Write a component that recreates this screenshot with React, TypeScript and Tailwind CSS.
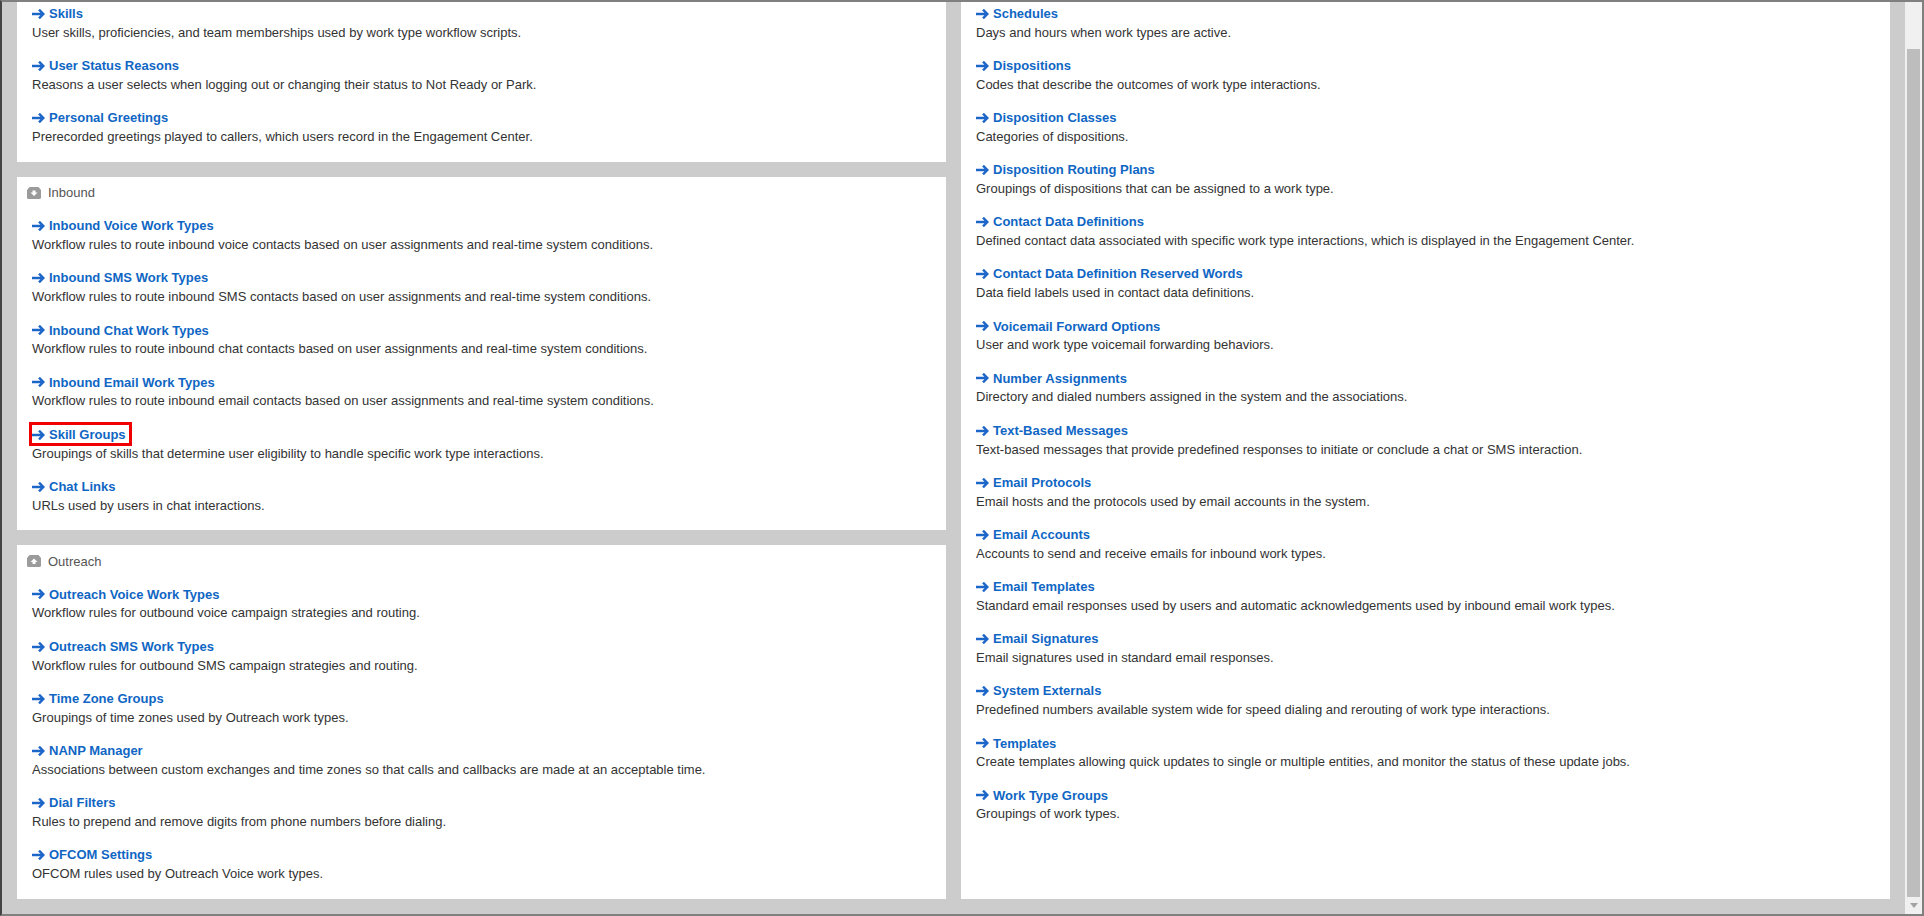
type Item = { title: string; desc: string; marked?: boolean };

const topLinks: Item[] = [
  { title: "Skills", desc: "User skills, proficiencies, and team memberships used by work type workflow scripts." },
  { title: "User Status Reasons", desc: "Reasons a user selects when logging out or changing their status to Not Ready or Park." },
  { title: "Personal Greetings", desc: "Prerecorded greetings played to callers, which users record in the Engagement Center." },
];

const inboundLinks: Item[] = [
  { title: "Inbound Voice Work Types", desc: "Workflow rules to route inbound voice contacts based on user assignments and real-time system conditions." },
  { title: "Inbound SMS Work Types", desc: "Workflow rules to route inbound SMS contacts based on user assignments and real-time system conditions." },
  { title: "Inbound Chat Work Types", desc: "Workflow rules to route inbound chat contacts based on user assignments and real-time system conditions." },
  { title: "Inbound Email Work Types", desc: "Workflow rules to route inbound email contacts based on user assignments and real-time system conditions." },
  { title: "Skill Groups", desc: "Groupings of skills that determine user eligibility to handle specific work type interactions.", marked: true },
  { title: "Chat Links", desc: "URLs used by users in chat interactions." },
];

const outreachLinks: Item[] = [
  { title: "Outreach Voice Work Types", desc: "Workflow rules for outbound voice campaign strategies and routing." },
  { title: "Outreach SMS Work Types", desc: "Workflow rules for outbound SMS campaign strategies and routing." },
  { title: "Time Zone Groups", desc: "Groupings of time zones used by Outreach work types." },
  { title: "NANP Manager", desc: "Associations between custom exchanges and time zones so that calls and callbacks are made at an acceptable time." },
  { title: "Dial Filters", desc: "Rules to prepend and remove digits from phone numbers before dialing." },
  { title: "OFCOM Settings", desc: "OFCOM rules used by Outreach Voice work types." },
];

const rightLinks: Item[] = [
  { title: "Schedules", desc: "Days and hours when work types are active." },
  { title: "Dispositions", desc: "Codes that describe the outcomes of work type interactions." },
  { title: "Disposition Classes", desc: "Categories of dispositions." },
  { title: "Disposition Routing Plans", desc: "Groupings of dispositions that can be assigned to a work type." },
  { title: "Contact Data Definitions", desc: "Defined contact data associated with specific work type interactions, which is displayed in the Engagement Center." },
  { title: "Contact Data Definition Reserved Words", desc: "Data field labels used in contact data definitions." },
  { title: "Voicemail Forward Options", desc: "User and work type voicemail forwarding behaviors." },
  { title: "Number Assignments", desc: "Directory and dialed numbers assigned in the system and the associations." },
  { title: "Text-Based Messages", desc: "Text-based messages that provide predefined responses to initiate or conclude a chat or SMS interaction." },
  { title: "Email Protocols", desc: "Email hosts and the protocols used by email accounts in the system." },
  { title: "Email Accounts", desc: "Accounts to send and receive emails for inbound work types." },
  { title: "Email Templates", desc: "Standard email responses used by users and automatic acknowledgements used by inbound email work types." },
  { title: "Email Signatures", desc: "Email signatures used in standard email responses." },
  { title: "System Externals", desc: "Predefined numbers available system wide for speed dialing and rerouting of work type interactions." },
  { title: "Templates", desc: "Create templates allowing quick updates to single or multiple entities, and monitor the status of these update jobs." },
  { title: "Work Type Groups", desc: "Groupings of work types." },
];

const LinkArrow = () => (
  <svg viewBox="0 0 13 10" className="mr-[4px] h-[10px] w-[13px] shrink-0" fill="none">
    <path d="M0 5h11M7 .6 11.400 5 7 9.400" stroke="#1c66c9" strokeWidth="2.4" />
  </svg>
);

const LinkRow = ({ item }: { item: Item }) => (
  <div className="h-[52.14px] pl-[15px]">
    <div className="flex h-[18px] items-center">
      <a href="#" className="relative flex items-center text-[13px] font-bold text-[#0f66c4]">
        <LinkArrow />
        {item.title}
        {item.marked && (
          <span className="absolute left-[-3px] right-[-6px] top-[-3px] h-[24px] border-[3px] border-[#f00000]" />
        )}
      </a>
    </div>
    <p className="mt-[1px] h-[18px] text-[13px] leading-[18px] text-[#333333]">{item.desc}</p>
  </div>
);

const TrayIcon = ({ up }: { up?: boolean }) => (
  <svg viewBox="0 0 14 12" className="h-[12px] w-[14px]">
    <path d="M2.500 0h9L14 3v7.500a1.500 1.500 0 0 1-1.500 1.500h-11A1.500 1.500 0 0 1 0 10.500V3z" fill="#9b9b9b" />
    {up ? <path d="M7 3.500 10.500 7H8.500v2h-3V7h-2z" fill="#fff" /> : <path d="M5.500 3.500h3v2h2L7 9 3.500 5.500h2z" fill="#fff" />}
  </svg>
);

const Section = ({ label, up, items, className }: { label: string; up?: boolean; items: Item[]; className: string }) => (
  <section className={`bg-white ${className}`}>
    <div className="mb-[8px] flex h-[32px] items-center pl-[10px]">
      <TrayIcon up={up} />
      <span className="ml-[7px] text-[13px] text-[#555555]">{label}</span>
    </div>
    {items.map((item) => (
      <LinkRow key={item.title} item={item} />
    ))}
  </section>
);

const App = () => {
  return (
    <div className="flex h-[916px] w-[1924px] overflow-hidden border-t-2 border-r-2 border-b-2 border-l-2 border-t-[#808080] border-r-[#808080] border-b-[#808080] border-l-[#444444] bg-[#cccccc] font-['Liberation_Sans',Arial,sans-serif]">
      <div className="flex flex-1 gap-[15px] pl-[15px] pr-[15px]">
        {/* Left column */}
        <div className="flex w-[929px] flex-col gap-[15px]">
          <section className="h-[160px] bg-white pt-[2.5px]">
            {topLinks.map((item) => (
              <LinkRow key={item.title} item={item} />
            ))}
          </section>
          <Section label="Inbound" items={inboundLinks} className="h-[353px]" />
          <Section label="Outreach" up items={outreachLinks} className="h-[354px] pt-[0.4px]" />
        </div>
        {/* Right column */}
        <div className="h-[897px] w-[929px] bg-white pt-[2.5px]">
          {rightLinks.map((item) => (
            <LinkRow key={item.title} item={item} />
          ))}
        </div>
      </div>
      {/* Scrollbar */}
      <div className="flex w-[17px] flex-col items-center bg-[#f0f0f0]">
        <div className="mt-[47px] h-[848px] w-[13px] bg-[#bdbdbd]" />
        <svg viewBox="0 0 8 5" className="mt-[6px] h-[5px] w-[8px]">
          <path d="M0 0h8L4 5z" fill="#a3a3a3" />
        </svg>
      </div>
    </div>
  );
};

export default App;
